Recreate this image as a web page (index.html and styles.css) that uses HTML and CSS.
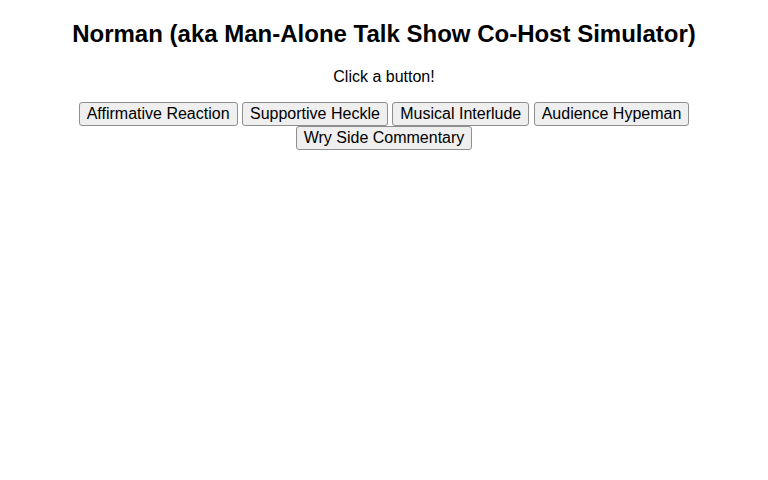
FILE: index.html
```html
<!DOCTYPE html>
<html lang="en">
<head>
  <meta charset="UTF-8" />
  <title>Norman</title>
  <link rel="stylesheet" href="styles.css">
</head>
<body>
  <h1>Norman (aka Man-Alone Talk Show Co-Host Simulator)</h1>
  <p id="status">Click a button!</p>
  <div class="buttons">
    <button>Affirmative Reaction</button>
    <button>Supportive Heckle</button>
    <button>Musical Interlude</button>
    <button>Audience Hypeman</button>
    <button>Wry Side Commentary</button>
  </div>
</body>
</html>
```

FILE: styles.css
```css
body {
  margin: 8px;
  font-family: "Liberation Sans", Arial, sans-serif;
  text-align: center;
  color: #000;
  background: #fff;
}
h1 {
  font-size: 24px;
  margin: 12px 0 20px;
}
p {
  font-size: 16px;
  margin: 0 0 16px;
}
.buttons {
  line-height: 18px;
}
button {
  font-family: "Liberation Sans", Arial, sans-serif;
  font-size: 16px;
  line-height: 18px;
  padding: 2px 7px;
  background: #efefef;
  border: 1px solid #8f8f8f;
  border-radius: 3px;
  color: #000;
  cursor: pointer;
  vertical-align: top;
}
```
